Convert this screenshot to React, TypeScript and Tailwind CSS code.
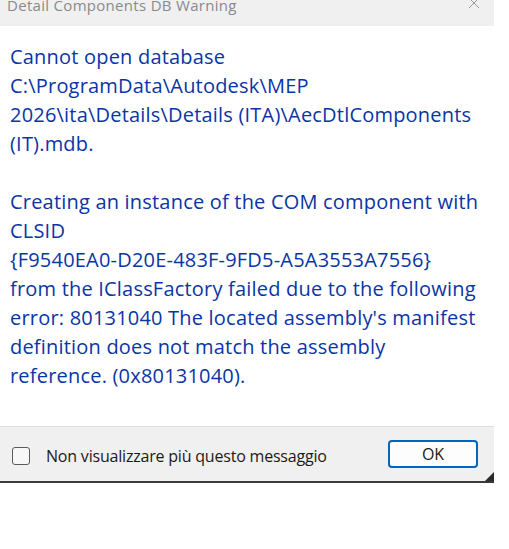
import React from "react";

export default function App() {
  const font = { fontFamily: '"Open Sans", "Noto Sans", sans-serif' };
  return (
    <div className="w-[509px] h-[549px] bg-white overflow-hidden" style={font}>
      <div className="w-[494px] flex flex-col">
        {/* title bar */}
        <div className="h-[26px] bg-[#f0f0f0] flex items-start justify-between relative">
          <div className="ml-[7px] -mt-[2px] text-[15px] leading-[15px] text-[#8a8a8a] whitespace-nowrap tracking-[0.3px]">
            Detail Components DB Warning
          </div>
          <svg className="mr-[14px] -mt-[3px]" width="12" height="12" viewBox="0 0 12 12">
            <path d="M1 1 L11 11 M11 1 L1 11" stroke="#9a9a9a" strokeWidth="1" fill="none" />
          </svg>
        </div>
        {/* body */}
        <div className="h-[400px] bg-white pt-[16px] pl-[10px] pr-[4px]">
          <div className="text-[20px] leading-[29px] text-[#0a35a6] whitespace-nowrap tracking-[0.2px]">
            <div>Cannot open database</div>
            <div>C:\ProgramData\Autodesk\MEP</div>
            <div>2026\ita\Details\Details (ITA)\AecDtlComponents</div>
            <div>(IT).mdb.</div>
            <div className="h-[29px]" />
            <div>Creating an instance of the COM component with</div>
            <div>CLSID</div>
            <div>{"{F9540EA0-D20E-483F-9FD5-A5A3553A7556}"}</div>
            <div>from the IClassFactory failed due to the following</div>
            <div>error: 80131040 The located assembly's manifest</div>
            <div>definition does not match the assembly</div>
            <div>reference. (0x80131040).</div>
          </div>
        </div>
        {/* footer */}
        <div className="h-[57px] bg-[#f0f0f0] border-t border-[#dfdfdf] border-b-2 border-b-[#3a3a3a] flex items-center justify-between pl-[12px] pr-[16px] relative">
          <div className="flex items-center mt-[3px]">
            <div className="w-[18px] h-[18px] rounded-[3px] border border-[#5a5a5a] bg-[#f7f7f7]" />
            <span className="ml-[16px] text-[16px] text-[#1a1a1a] whitespace-nowrap tracking-[-0.2px]">
              Non visualizzare più questo messaggio
            </span>
          </div>
          <button className="w-[90px] h-[28px] rounded-[4px] border-2 border-[#0067c0] bg-[#fdfdfd] text-[16px] text-[#1a1a1a] flex items-center justify-center mb-[1px]">
            OK
          </button>
          <svg className="absolute right-0 bottom-0" width="9" height="9" viewBox="0 0 9 9">
            <path d="M9 0 L9 9 L0 9 Z" fill="#2a2a2a" />
          </svg>
        </div>
      </div>
    </div>
  );
}
